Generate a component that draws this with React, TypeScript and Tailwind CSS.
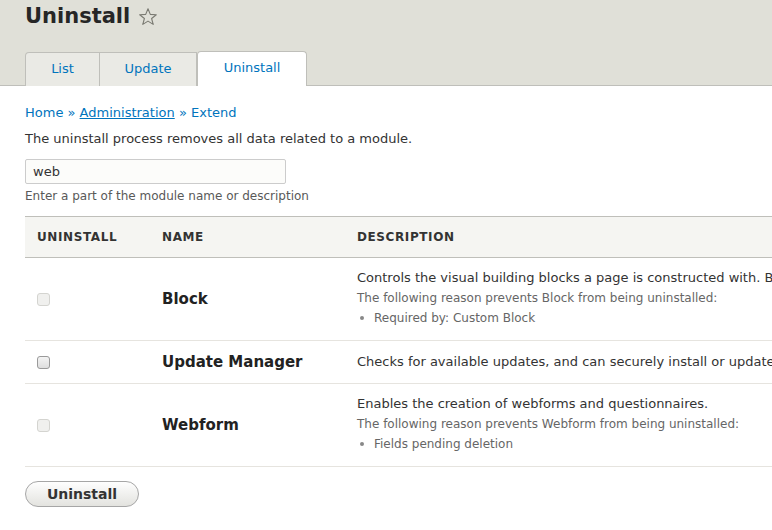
const font = { fontFamily: '"DejaVu Sans", "Liberation Sans", sans-serif' };

type Mod = {
  name: string;
  desc: string;
  reason?: string;
  items?: string[];
  disabled: boolean;
};

const modules: Mod[] = [
  {
    name: "Block",
    desc: "Controls the visual building blocks a page is constructed with. Blocks are boxes of content rendered into an area, or region, of a web page.",
    reason: "The following reason prevents Block from being uninstalled:",
    items: ["Required by: Custom Block"],
    disabled: true,
  },
  {
    name: "Update Manager",
    desc: "Checks for available updates, and can securely install or update modules and themes via a web interface.",
    disabled: false,
  },
  {
    name: "Webform",
    desc: "Enables the creation of webforms and questionnaires.",
    reason: "The following reason prevents Webform from being uninstalled:",
    items: ["Fields pending deletion"],
    disabled: true,
  },
];

function Checkbox({ disabled }: { disabled: boolean }) {
  return (
    <span
      className={
        disabled
          ? "block w-[13px] h-[13px] rounded-[3px] border border-[#d4d4d0] bg-[#f0f0ee]"
          : "block w-[13px] h-[13px] rounded-[3px] border border-[#9a9a9a] bg-gradient-to-b from-[#f4f4f4] to-[#dedede]"
      }
    />
  );
}

function StarIcon() {
  return (
    <svg width="20" height="20" viewBox="0 0 20 20" className="ml-[8px] mt-[1px]">
      <path
        d="M10 1.8 L12.3 7.4 L18.3 7.7 L13.6 11.5 L15.2 17.4 L10 14.1 L4.8 17.4 L6.4 11.5 L1.7 7.7 L7.7 7.4 Z"
        fill="none"
        stroke="#7a7a72"
        strokeWidth="1.1"
        strokeLinejoin="round"
      />
    </svg>
  );
}

export default function App() {
  return (
    <div className="w-[772px] h-[530px] overflow-hidden bg-white text-[#333] text-[13px]" style={font}>
      <div className="bg-[#e0e0d8] border-b border-[#bfbfba] px-[25px]">
        <div className="flex items-center h-[32px] mt-0">
          <h1 className="text-[21px] font-bold text-[#262626] leading-none">Uninstall</h1>
          <StarIcon />
        </div>
        <div className="flex items-end mt-[19px] -mb-px h-[35px]">
          <a className="h-[34px] w-[75px] flex items-center justify-center pb-[2px] bg-[#eaeae5] border border-[#bfbfba] border-b-0 rounded-tl-[4px] text-[#0074bd]">
            List
          </a>
          <a className="h-[34px] w-[97px] flex items-center justify-center pb-[2px] bg-[#eaeae5] border-t border-r border-[#bfbfba] text-[#0074bd]">
            Update
          </a>
          <a className="h-[35px] w-[110px] flex items-center justify-center bg-white border border-[#bfbfba] border-b-0 rounded-t-[4px] text-[#0074bd] pb-[3px]">
            Uninstall
          </a>
        </div>
      </div>

      <div className="px-[25px]">
        <div className="mt-[17px] text-[#0074bd] leading-[20px]">
          <a>Home</a> » <a className="underline">Administration</a> » <a>Extend</a>
        </div>
        <p className="mt-[6px] leading-[20px]">The uninstall process removes all data related to a module.</p>
        <div className="mt-[10px] w-[261px] h-[25px] border border-[#ccc] rounded-[2px] bg-[#fcfcfa] px-[7px] flex items-center text-[13px] text-[#333]">
          web
        </div>
        <p className="mt-[3px] text-[12px] text-[#595959] leading-[18px]">Enter a part of the module name or description</p>

        <table className="mt-[11px] w-[1100px] table-fixed border-collapse text-left">
          <colgroup>
            <col className="w-[125px]" />
            <col className="w-[195px]" />
            <col />
          </colgroup>
          <thead>
            <tr className="bg-[#f5f5f2] border-t border-b border-[#bfbfba]">
              <th className="h-[41px] px-[12px] text-[12px] font-bold uppercase tracking-[0.6px] text-[#333]">Uninstall</th>
              <th className="px-[12px] text-[12px] font-bold uppercase tracking-[0.6px] text-[#333]">Name</th>
              <th className="px-[12px] text-[12px] font-bold uppercase tracking-[0.6px] text-[#333]">Description</th>
            </tr>
          </thead>
          <tbody>
            {modules.map((m) => (
              <tr key={m.name} className="border-b border-[#e6e4df]">
                <td className="px-[12px] align-middle">
                  <Checkbox disabled={m.disabled} />
                </td>
                <td className="px-[12px] align-middle whitespace-nowrap">
                  <span className="text-[15px] font-bold text-[#222]">{m.name}</span>
                </td>
                <td className={m.reason ? "px-[12px] pt-[10px] pb-[12px] align-top" : "px-[12px] py-[11px] align-top"}>
                  <div className="whitespace-nowrap leading-[20px]">{m.desc}</div>
                  {m.reason && (
                    <div className="text-[12px] text-[#666] leading-[20px]">
                      <div>{m.reason}</div>
                      <ul className="mt-0">
                        {m.items?.map((it) => (
                          <li key={it} className="flex items-center">
                            <span className="inline-block w-[4px] h-[4px] rounded-full bg-[#888] ml-[3px] mr-[10px]" />
                            {it}
                          </li>
                        ))}
                      </ul>
                    </div>
                  )}
                </td>
              </tr>
            ))}
          </tbody>
        </table>

        <button className="mt-[14px] h-[26px] w-[114px] rounded-full border border-[#a6a6a6] bg-gradient-to-b from-[#fefefe] to-[#e3e3df] text-[14px] font-bold text-[#333] leading-none">
          Uninstall
        </button>
      </div>
    </div>
  );
}
